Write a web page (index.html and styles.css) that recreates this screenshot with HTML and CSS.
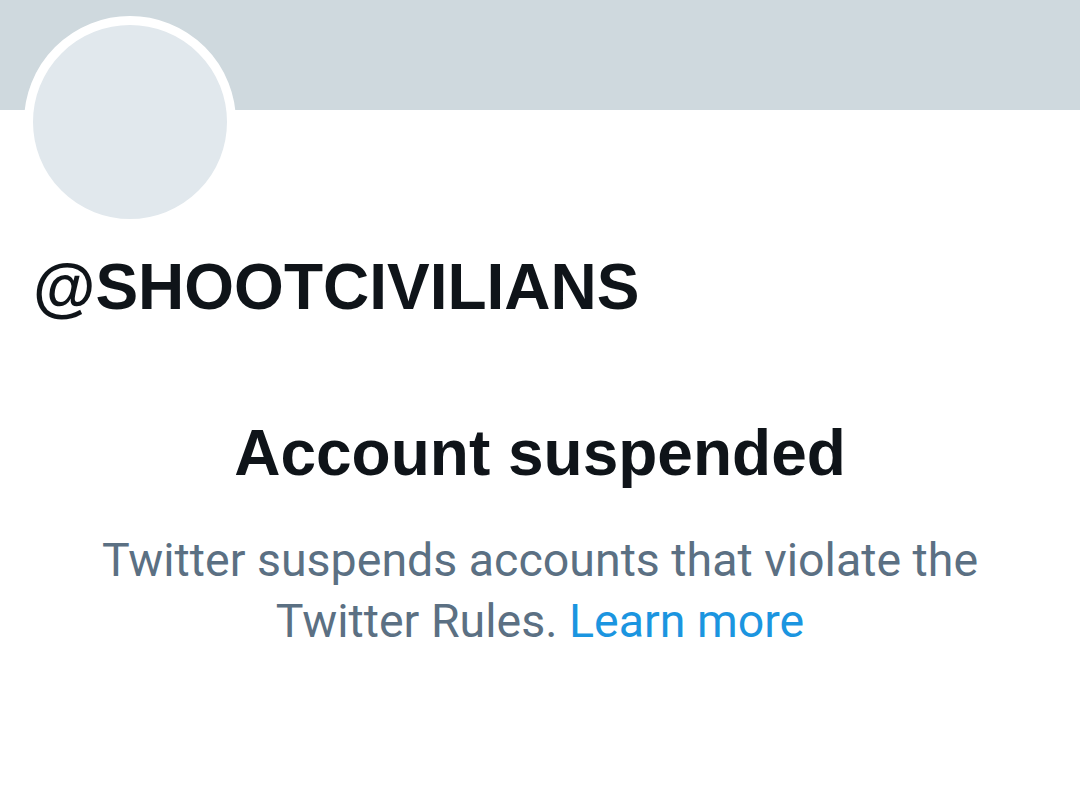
FILE: index.html
```html
<!DOCTYPE html>
<html>
<head>
<meta charset="utf-8">
<link rel="stylesheet" href="styles.css">
</head>
<body>
<div class="page">
  <div class="banner"></div>
  <div class="avatar-row">
    <div class="avatar"></div>
  </div>
  <div class="handle">@SHOOTCIVILIANS</div>
  <div class="notice">
    <h1 class="title">Account suspended</h1>
    <p class="desc">Twitter suspends accounts that violate the Twitter Rules. <a class="link" href="#">Learn more</a></p>
  </div>
</div>
</body>
</html>
```

FILE: styles.css
```css
html, body {
  margin: 0;
  padding: 0;
  background: #ffffff;
}
.page {
  width: 1080px;
  height: 805px;
  overflow: hidden;
  display: flex;
  flex-direction: column;
}
.banner {
  height: 110px;
  background: #cfd9de;
  flex: none;
}
.avatar-row {
  padding-left: 24px;
  margin-top: -94px;
  display: flex;
}
.avatar {
  width: 194px;
  height: 194px;
  border: 9px solid #ffffff;
  border-radius: 50%;
  background: #e1e8ed;
}
.handle {
  font-family: "Liberation Sans", Arial, sans-serif;
  font-weight: 700;
  font-size: 64px;
  line-height: 76px;
  color: #0f1419;
  padding-left: 33px;
  margin-top: 21px;
}
.notice {
  display: flex;
  flex-direction: column;
  align-items: center;
  text-align: center;
  margin-top: 90px;
}
.title {
  margin: 0;
  font-family: "Liberation Sans", Arial, sans-serif;
  font-weight: 700;
  font-size: 64px;
  line-height: 76px;
  color: #0f1419;
}
.desc {
  margin: 39px 0 0 0;
  width: 960px;
  font-family: Roboto, "Noto Sans", sans-serif;
  font-size: 46.5px;
  line-height: 61px;
  color: #5b7083;
}
.link {
  color: #1b95e0;
  text-decoration: none;
}
```
